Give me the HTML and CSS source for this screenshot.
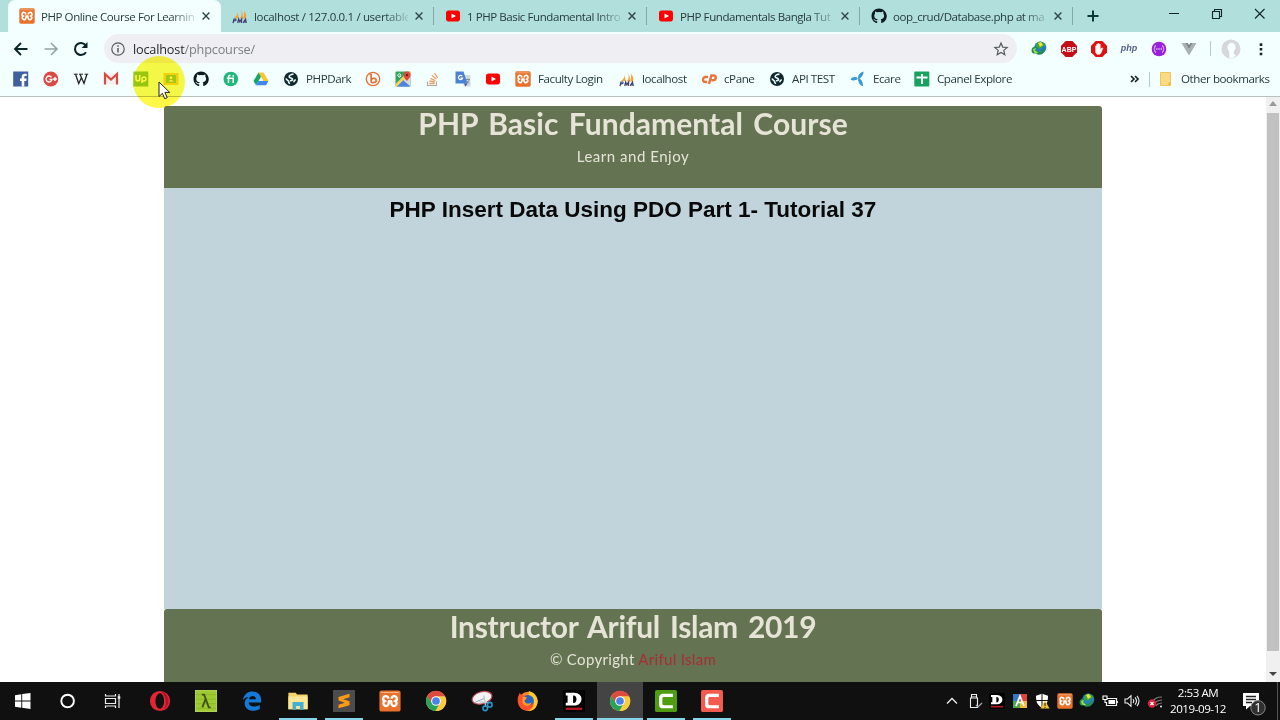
FILE: index.html
```html
<!DOCTYPE html>
<html lang="en">
<head>
<meta charset="utf-8">
<title>PHP Online Course For Learning</title>
<link rel="stylesheet" href="styles.css">
</head>
<body>
<svg class="sprite" xmlns="http://www.w3.org/2000/svg">
  <symbol id="xampp" viewBox="0 0 16 16"><rect x=".3" y=".3" width="15.4" height="15.4" rx="1.600" fill="#e8722c"/><path d="M1.500 1.800h13" stroke="#f7b78d" stroke-width=".7"/><path d="M6.500 8.200h3M7 8.200v1.600a1.900 1.900 0 1 1-2.900-1.700 1.900 1.900 0 1 1 2.700-1.700M9 8.200v1.600a1.900 1.900 0 1 0 2.900-1.700 1.900 1.900 0 1 0-2.700-1.700" fill="none" stroke="#fff" stroke-width="1.700"/></symbol>
  <symbol id="pma" viewBox="0 0 16 16"><path d="M5.500 1.500C6.500 5 5 8 2 10h4.500zM8 1c2.500 3 2 7-.5 9.500h3C11.500 7 10.500 4 8 1zM12 2.500c2.300 2.500 2.500 5 2.200 8H11c1-3 1.500-5 1-8z" fill="#f5a23a"/><path d="M1 15.200l1-4.200h1.800q1 1.800-1.900 1.900M5.700 15l1-4 1 2.800 2-2.800-.4 4M11 15l2.500-4 .8 4m-2.300-1.200h2.300" fill="none" stroke="#3b3b70" stroke-width="1.200"/></symbol>
  <symbol id="youtube" viewBox="0 0 16 16"><rect x="1" y="2.600" width="14" height="10.800" rx="2.600" fill="#f00"/><path d="M6.500 5.500v5L11 8z" fill="#fff"/></symbol>
  <symbol id="github" viewBox="0 0 16 16"><path fill="#0d1b20" d="M8 .5C3.800.5.5 3.800.5 8c0 3.500 2.200 6.200 5.200 7.100.4.100.5-.2.500-.4v-1.500c-2.100.5-2.600-.9-2.600-.9-.4-.9-.9-1.100-.9-1.100-.7-.5 0-.5 0-.5.800.1 1.200.8 1.200.8.700 1.200 1.800.8 2.300.6.100-.5.300-.8.500-1-1.700-.2-3.400-.8-3.400-3.700 0-.8.300-1.500.8-2-.1-.2-.3-1 .1-2 0 0 .6-.2 2.100.8a7 7 0 0 1 3.800 0c1.400-1 2.100-.8 2.100-.8.400 1 .1 1.800.1 2 .5.500.8 1.200.8 2 0 2.900-1.800 3.500-3.400 3.700.3.200.5.700.5 1.400v2.200c0 .2.100.5.500.4a7.500 7.500 0 0 0 5.100-7.100C15.500 3.800 12.200.5 8 .5z"/></symbol>
  <symbol id="globe" viewBox="0 0 16 16"><circle cx="8" cy="8" r="7" fill="#10282d"/><path d="M10.500 3C9 3.300 6 4 6.200 5.800c.2 1.500 3 1 3.300 2.600.2 1.300-1.500 1.500-2.700 1.300M3 7.500c.5 1.500 2.500 1.700 2.600 3.200 0 .8 1 1.200.8 2.300M12.800 8.800c-1.300.3-1.900 1.200-1.900 2.500" stroke="#e9fafa" stroke-width="1.600" fill="none"/></symbol>
  <symbol id="close" viewBox="0 0 16 16"><path d="M4.600 4.600l6.800 6.800m0-6.800l-6.800 6.800" stroke="#304648" stroke-width="1.400"/></symbol>
  <symbol id="chrome" viewBox="0 0 24 24"><circle cx="12" cy="12" r="11" fill="#fc4"/><path d="M2.500 6.500A11 11 0 0 1 22 7H12l-5 7.500z" fill="#dc4b3d"/><path d="M2.500 6.500A11 11 0 0 0 11.500 23l4.700-8.500L7 14z" fill="#29a35a"/><path d="M22 7H12l4.500 7.500-5 8.500A11 11 0 0 0 22 7z" fill="#fdcb3f"/><circle cx="12" cy="12" r="5.300" fill="#fff"/><circle cx="12" cy="12" r="4.200" fill="#4783e8"/></symbol>
  <symbol id="idm" viewBox="0 0 16 16"><circle cx="9.300" cy="6.500" r="6" fill="#277dc4"/><path d="M6 2c3-3 7-.5 8.500 2L9 8 5 6z" fill="#39a83c"/><path d="M7 2l3-1 2 3-3 2z" fill="#f2df38"/><path d="M.5 9C1 5.500 5 4.500 6 7l-1 3 4 1 4-4 1 2c-1 5-7 6-9 3.500C2 13 .5 12 .5 9z" fill="#278c52"/><path d="M2 8l3-1-1 2.500 3 2-1 1-3-1z" fill="#9be04b"/></symbol>
  <symbol id="dee" viewBox="0 0 24 24"><rect width="24" height="24" fill="#000"/><path d="M3 3h9c11 0 11 14 0 14H3v-3h2V6H3zm8 3v8c5 1 5-9 0-8z" fill="#fff" fill-rule="evenodd"/><path d="M3 20.500h18" stroke="#b81820" stroke-width="2.500"/></symbol>
  <symbol id="camtasia" viewBox="0 0 24 24"><rect width="24" height="24" rx="2" fill="currentColor"/><path d="M19.500 4H9.500C5.500 4 4.500 6 4.500 9v6c0 4 1 5 5 5h10v-3.500H10c-1.500 0-2-.5-2-2v-5c0-1.500.5-2 2-2h9.500z" fill="#fff"/></symbol>
</svg>

<header class="browser">
  <div class="tabs">
    <div class="tab active"><svg><use href="#xampp"/></svg><span>PHP Online Course For Learnin</span><svg class="x"><use href="#close"/></svg></div>
    <div class="tab"><svg><use href="#pma"/></svg><span class="t2">localhost / 127.0.0.1 / usertable</span><svg class="x"><use href="#close"/></svg></div>
    <div class="tab"><svg><use href="#youtube"/></svg><span>1 PHP Basic Fundamental Intro</span><svg class="x"><use href="#close"/></svg></div>
    <div class="tab"><svg><use href="#youtube"/></svg><span>PHP Fundamentals Bangla Tut</span><svg class="x"><use href="#close"/></svg></div>
    <div class="tab"><svg><use href="#github"/></svg><span>oop_crud/Database.php at ma</span><svg class="x"><use href="#close"/></svg></div>
    <svg class="newtab" viewBox="0 0 16 16"><path d="M8 2.500v11M2.500 8h11" stroke="#0a3a35" stroke-width="2"/></svg>
    <svg class="winctl" viewBox="0 0 110 32"><g fill="none" stroke="#122527" stroke-width="1.100"><path d="M9 13.500h10M52.500 11.500h7v7h-7zM54.500 11.500v-2h7v7h-2M95 9l9.500 9.500m0-9.500L95 18.500"/></g></svg>
  </div>
  <div class="toolbar">
    <svg class="nav" viewBox="0 0 16 16"><path d="M14.500 8H2.500M8 2L2 8l6 6" fill="none" stroke="#0b2427" stroke-width="1.900"/></svg>
    <svg class="nav" viewBox="0 0 16 16"><path d="M1.500 8h12M8 2l6 6-6 6" fill="none" stroke="#93a3a3" stroke-width="1.600"/></svg>
    <svg class="nav" viewBox="0 0 16 16"><path d="M13 11.200A6 6 0 1 1 12.500 4" fill="none" stroke="#0b2427" stroke-width="2"/><path d="M14.500 1v6H8.600z" fill="#0b2427"/></svg>
    <div class="omnibox">
      <svg viewBox="0 0 16 16"><circle cx="8" cy="8" r="6.200" fill="none" stroke="#555c60" stroke-width="1.200"/><path d="M8 7v4.500M8 4.300v1.500" stroke="#555c60" stroke-width="1.500"/></svg>
      <span class="url">localhost<i>/phpcourse/</i></span>
      <svg class="star" viewBox="0 0 16 16"><path d="M8 2l1.700 4.100 4.500.4-3.400 2.900 1 4.400L8 11.500l-3.800 2.300 1-4.400-3.400-2.900 4.500-.4z" fill="none" stroke="#555c60" stroke-width="1.200"/></svg>
    </div>
    <div class="exts">
      <svg><use href="#idm"/></svg>
      <svg viewBox="0 0 16 16"><path d="M4.700 0h6.600L16 4.700v6.600L11.300 16H4.700L0 11.300V4.700z" fill="#c70d17"/><text x="8" y="10.800" class="abp">ABP</text></svg>
      <svg viewBox="0 0 16 16"><path d="M4.700 0h6.600L16 4.700v6.600L11.300 16H4.700L0 11.300V4.700z" fill="#e01010"/><path d="M4.600 8V5h1.100v2V3.300h1.200V7 2.600h1.200V7 3.300h1.200v4l.3 1.200 1.300-1.700 1 .5-1.800 4.500-1.200 1.500H6l-1.400-2z" fill="#fff" stroke="#fff" stroke-width=".5"/></svg>
      <span class="php">php</span>
      <svg viewBox="0 0 16 16"><circle cx="8" cy="8" r="7.300" fill="#9a20dc"/><path d="M5 4.500c-2 0-.5 3-2.200 3.500 1.700.5.200 3.500 2.200 3.500M11 4.500c2 0 .5 3 2.200 3.500-1.700.5-.2 3.500-2.200 3.500" fill="none" stroke="#e9c9fa"/><path d="M5 8h6" stroke="#fff" stroke-dasharray="1.500 .8"/></svg>
      <svg viewBox="0 0 16 16"><path d="M.5 2h4L8 8l3.500-6h4L8 14.500z" fill="#a8b0b1"/><path d="M4.500 2h2.200L8 4.200 9.300 2h2.200L8 8z" fill="#788182"/></svg>
    </div>
    <i class="sep"></i>
    <svg class="avatar" viewBox="0 0 20 20"><circle cx="10" cy="10" r="9.500" fill="#d6d7da"/><ellipse cx="10.500" cy="8.500" rx="4" ry="4.700" fill="#f8ffff"/><path d="M8 11h4.500l.3 4 2.200 1.500-3 2.500H8.500z" fill="#f8ffff"/></svg>
    <svg class="menu" viewBox="0 0 16 16"><path d="M8 2.300v2.600M8 7v2.600M8 11.700v2.600" stroke="#16282a" stroke-width="2.600"/></svg>
  </div>
  <nav class="bookmarks">
    <a><svg viewBox="0 0 16 16"><rect x=".2" y=".5" width="15" height="15" fill="#3f5f9f"/><path d="M8.700 15.500V10H7V7.600h1.700V6c0-2.300 1.300-3.200 3-3.200h2V5h-1.300c-.9 0-1.100.5-1.100 1.200v1.400h2.300L13.300 10h-2v5.500z" fill="#fff"/></svg></a>
    <a><svg viewBox="0 0 16 16"><circle cx="7.800" cy="8" r="7.500" fill="#dc4a43"/><path d="M8.500 6.300A3 3 0 1 0 9 8.500H6.400M12 6v4m-2-2h4" fill="none" stroke="#fff" stroke-width="1.400"/></svg></a>
    <a><svg viewBox="0 0 16 16"><path d="M.8 3.200h4M6 3.200h4M11.500 3.200h3.700" stroke="#222" stroke-width="1"/><path d="M2.500 3.200l3.200 9.300L8.500 6.500M7 3.200l4 9.300 2.900-9.300" fill="none" stroke="#222" stroke-width="1.300"/></svg></a>
    <a><svg viewBox="0 0 16 16"><path d="M1 2.500h14v11H1z" fill="#f3f0f0"/><path d="M2 13.500V3l6 5.500L14 3v10.500" fill="none" stroke="#d94b42" stroke-width="2.200"/></svg></a>
    <a><svg viewBox="0 0 16 16"><rect x=".3" y=".5" width="15" height="15" fill="#98cb36"/><path d="M3 4v4c0 2.500 3.700 2.500 3.700 0V4M9 12V6.500m0 1c1-2.500 4-1.500 4 .5s-3 3-4 1" fill="none" stroke="#fff" stroke-width="1.500"/></svg></a>
    <a><svg viewBox="0 0 16 16"><path d="M.5 2h15v12H.5z" fill="#f3d52c"/><path d="M3 4h10v8H3z" fill="#a4cc45"/><circle cx="8" cy="6.700" r="1.300" fill="#fff"/><path d="M5.200 10.500q2.800-3 5.600 0z" fill="#fff"/></svg></a>
    <a><svg><use href="#github"/></svg></a>
    <a><svg viewBox="0 0 16 16"><circle cx="7.800" cy="8" r="7.300" fill="#20b878"/><path d="M5.500 12V6q0-1.700 2-1.700M3.800 7.300h6.400V12" fill="none" stroke="#fff" stroke-width="1.500"/><circle cx="10.200" cy="4.800" r=".9" fill="#fff"/></svg></a>
    <a><svg viewBox="0 0 16 16"><path d="M5.500 1.500h5L15.500 10h-5z" fill="#fbc52d"/><path d="M5.500 1.500L.5 10 3 14.300 8 5.800z" fill="#16a765"/><path d="M3 14.300h10l2.500-4.300h-10z" fill="#4385ef"/></svg></a>
    <a><svg><use href="#globe"/></svg><span>PHPDark</span></a>
    <a><svg viewBox="0 0 16 16"><circle cx="8" cy="8" r="6.700" fill="none" stroke="#e86f35" stroke-width="1.300"/><path d="M4.500 3.500h1.700v7.300c0 1.300 5 1.300 5-1.300S7.500 6.300 6.500 9" fill="none" stroke="#e86f35" stroke-width="1.700"/></svg></a>
    <a><svg viewBox="0 0 16 16"><rect x=".5" y=".5" width="15" height="15" rx="1" fill="#32a35b"/><path d="M.5 13L13 .5h2.500v3l-12 12h-3z" fill="#f6d35a"/><path d="M2 15.500L8.500 9l6.500 6.500z" fill="#4a86e8"/><path d="M8.500 9.500l7 6V4z" fill="#d8dada"/><path d="M12 10C9.300 7 8.500 5.500 8.500 4a3.500 3.500 0 0 1 7 0c0 1.500-1 3-3.500 6z" fill="#df493f"/><circle cx="12" cy="4" r="1.200" fill="#7b201d"/><path d="M5.800 3.600a1.600 1.600 0 1 0 .2 1.200H4.500" stroke="#fff" fill="none"/></svg></a>
    <a><svg viewBox="0 0 16 16"><path d="M2.500 10.500v4h9v-4" fill="none" stroke="#a6aaa9" stroke-width="1.100"/><path d="M4.200 12.500h5.500M4.400 10l5.400 1M5.300 7.300l5 2.400M7 4.500l4.300 3.600M9.500 2l3.200 4.800" stroke="#eea266" stroke-width="1.300"/></svg></a>
    <a><svg viewBox="0 0 16 16"><path d="M6 4h9.500v11.500H9z" fill="#d3d9dc"/><path d="M.5.5h8l4 12H.5z" fill="#4a82da"/><path d="M9 12.500h3.500l-2 3z" fill="#315cac"/><path d="M7.200 5.200a2.100 2.100 0 1 0 .3 2H5.500" fill="none" stroke="#fff" stroke-width="1.200"/><path d="M10.500 8.500h4.500m-2.300-1v1m1.500 0c-.5 2-1.500 3-2.500 3.500m-.2-2.500l2.500 3" fill="none" stroke="#74838d" stroke-width=".8"/></svg></a>
    <a><svg><use href="#youtube"/></svg></a>
    <a><svg><use href="#xampp"/></svg><span>Faculty Login</span></a>
    <a><svg><use href="#pma"/></svg><span>localhost</span></a>
    <a><svg viewBox="0 0 16 16"><path d="M7 6H4.500a2.500 2.500 0 0 0 0 5H6M8 13l2.400-8.500h2a2.300 2.300 0 0 1 0 4.700h-2" fill="none" stroke="#ed713a" stroke-width="2.400"/></svg><span>cPane</span></a>
    <a><svg><use href="#globe"/></svg><span>API TEST</span></a>
    <a><svg viewBox="0 0 16 16"><g fill="#3797d8"><path d="M8 7c0-3 2-5.500 5.500-6.500C14 3 12 6 8.500 8.500zM7 6.500C4.500 5.500 2 6 .5 8.500 3 10 5.500 9.500 8 8zM8.500 7.500c2.500 0 4.500 3 4.500 7.500-2.500 0-4-2.500-5-6z"/></g></svg><span>Ecare</span></a>
    <a><svg viewBox="0 0 16 16"><rect x=".3" y=".5" width="15" height="15" rx="1" fill="#17a260"/><path d="M2.500 6.500h11M8 3v10" stroke="#fff" stroke-width="2"/></svg><span>Cpanel Explore</span></a>
    <a><svg class="more" viewBox="0 0 16 16"><path d="M4 5l3 3-3 3M8 5l3 3-3 3" fill="none" stroke="#142528" stroke-width="1.700"/></svg></a>
    <a class="other"><svg viewBox="0 0 16 16"><path d="M2.500 1.500h10v13h-10z" fill="#fadb84" stroke="#efc65c"/><path d="M10.500 14.500v-3h2v3z" fill="#e9b93e"/></svg><span>Other bookmarks</span></a>
  </nav>
</header>

<main class="viewport">
  <div class="page">
    <section class="banner"><h1 class="h-top">PHP Basic Fundamental Course</h1><p class="p-top">Learn and Enjoy</p></section>
    <section class="content"><h2>PHP Insert Data Using PDO Part 1- Tutorial 37</h2></section>
    <section class="banner"><h1 class="h-foot">Instructor Ariful Islam 2019</h1><p class="p-foot">© Copyright <a>Ariful Islam</a></p></section>
  </div>
  <div class="scrollbar"><i class="up"></i><div class="thumb"></div><i class="down"></i></div>
</main>

<footer class="taskbar">
  <div class="apps">
    <span class="sys"><svg viewBox="0 0 24 24"><path d="M4 6.200l6.300-1v6.300H4zM11.200 5.100L19.500 4v7.500h-8.300zM4 12.400h6.300v6.400L4 17.800zM11.200 12.400h8.300V20l-8.300-1.200z" fill="#fff"/></svg></span>
    <span class="sys"><svg viewBox="0 0 24 24"><circle cx="11.600" cy="12" r="6.300" fill="none" stroke="#fff" stroke-width="1.900"/></svg></span>
    <span class="sys task"><svg viewBox="0 0 24 24"><g fill="none" stroke="#eee" stroke-width="1.200"><path d="M4.500 5v2h10V5M4.500 9.500h10v5h-10zM4.500 19v-2h10v2M18 5v14"/><path d="M16.700 8.500h2.600" stroke-width="2.400"/></g></svg></span>
    <span><svg viewBox="0 0 24 24"><path fill-rule="evenodd" fill="#e32635" d="M12 1a11 11 0 1 0 0 22 11 11 0 0 0 0-22zm0 2.500c-6.500 1-6.500 16 0 17 6-1 6-16 0-17z"/><path d="M15 2c7 3 9 15 1 19 4-5 3-14-2-18z" fill="#ae1326"/></svg></span>
    <span><svg viewBox="0 0 24 24"><rect x=".5" y=".5" width="23" height="23" fill="#9fca32" stroke="#b8da58"/><path d="M1 5h22M1 10h22M1 15h22M1 20h22" stroke="#83b31e" stroke-width=".8"/><path d="M7.500 5h2.500l5 14H17M11.500 10L8 19" fill="none" stroke="#3f5025" stroke-width="2"/></svg></span>
    <span><svg viewBox="0 0 24 24"><path fill="#1479d7" d="M2 11C3.500 4 7.500 1.500 12.500 1.500c6 0 9.500 4.500 9.500 9v3H8.500c0 5 7.500 5.500 12 2.800v4.500C13 25 4 22 4 14.500c0-3 1.500-5.500 4.500-7C5.500 7.500 3 9.500 2 11zm6.700-1h7.500c0-4.500-6.500-4.500-7.500 0z"/></svg></span>
    <span class="run"><svg viewBox="0 0 24 24"><path d="M1.500 3h8l1.500 2h11.500v16h-21z" fill="#f5d36b"/><path d="M1.500 7h21v14h-21z" fill="#ffe596"/><path d="M6 13h12v8.500h-4v-4h-4v4H6z" fill="#43b0d6"/></svg></span>
    <span class="run"><svg viewBox="0 0 24 24"><rect width="24" height="24" fill="#4c4c4e"/><path d="M18 4v4L11 10.200l7 2v4.300L6 20v-4l7-2.200-7-2.300V7.500z" fill="#ff9b12"/></svg></span>
    <span><svg><use href="#xampp"/></svg></span>
    <span><svg><use href="#chrome"/></svg></span>
    <span><svg viewBox="0 0 24 24"><ellipse cx="12" cy="8.500" rx="11" ry="6.500" transform="rotate(-15 12 8.500)" fill="#f4f4f6" stroke="#c24d51" stroke-width="1.300"/><path d="M3 14l12-5" stroke="#959bad"/><path d="M14 6l2 12M9 13l10 1" stroke="#bec9d3" stroke-width="1.500"/><circle cx="15.500" cy="20" r="2.500" fill="none" stroke="#2699cf" stroke-width="1.700"/><circle cx="20.500" cy="16" r="2.500" fill="none" stroke="#2699cf" stroke-width="1.700"/></svg></span>
    <span><svg viewBox="0 0 24 24"><circle cx="12" cy="12.500" r="10.500" fill="#ff8321"/><path d="M13 1c8 2 12 10 8 17-2 4-6 5-9 5 5-2 8-6 5-11-3-3-5-5-4-11z" fill="#ffcb29"/><circle cx="12" cy="12" r="6.500" fill="#2a62c4"/><path d="M3 3c1 2 2 3 5 3l2 4-3 2c0 6 8 6 11 2 0 6-5 9-9 8C2 21 0 14 1 8z" fill="#ff502d"/><path d="M6 7l5 1-3 4c2 4 6 3 8 1-1 5-8 6-10 1z" fill="#f89e24"/></svg></span>
    <span class="run"><svg><use href="#dee"/></svg></span>
    <span class="run current"><svg><use href="#chrome"/></svg></span>
    <span class="run green"><svg><use href="#camtasia"/></svg></span>
    <span class="run red"><svg><use href="#camtasia"/></svg></span>
  </div>
  <div class="tray">
    <svg viewBox="0 0 16 16"><path d="M3 10.500l5-5 5 5" fill="none" stroke="#eee" stroke-width="1.300"/></svg>
    <svg viewBox="0 0 16 16"><path d="M4.500 5V1.500h5V5M3.500 5h7v9.500h-7zM6 3v1m2-1v1" fill="none" stroke="#eee" stroke-width="1.100"/><path d="M9 12l2 2 4-4" fill="none" stroke="#aaa" stroke-width="1.200"/></svg>
    <svg><use href="#dee"/></svg>
    <svg viewBox="0 0 16 16"><path d="M1 1h7v7H1z" fill="#3478c5"/><path d="M8 1h7v7H8z" fill="#df433b"/><path d="M1 8h7v7H1z" fill="#4da84d"/><path d="M8 8h7v7H8z" fill="#f2ba31"/><path d="M4 13L8 3l4 10M5.500 9.500h5" fill="none" stroke="#fff" stroke-width="1.700"/></svg>
    <svg viewBox="0 0 16 16"><path d="M8 .8l6 2c0 6-1 9-6 12C3 12 2 9 2 2.800z" fill="#fff"/><path d="M8 1v14M2 7.500h12" stroke="#111"/><path d="M11 7.500l4.500 8h-9z" fill="#f5c52d"/><path d="M11 10v3m0 .8v1" stroke="#222"/></svg>
    <svg><use href="#xampp"/></svg>
    <svg><use href="#idm"/></svg>
    <svg viewBox="0 0 16 16"><path d="M5 5.500h9.500v7H4.500v-3" fill="none" stroke="#eee" stroke-width="1.200"/><path d="M6.500 7h6.500v4H6.500z" fill="#fff"/><path d="M1 3h4v3.500H1zM3 6.500v3h2M15.300 8v2" fill="none" stroke="#fff" stroke-width="1.100"/></svg>
    <svg viewBox="0 0 16 16"><path d="M1 6h2.500L7 2.700v10.600L3.500 10H1zM9 6q1.500 2 0 4M11 4.300q3 3.700 0 7.400M13 2.800q4 5.200 0 10.400" fill="none" stroke="#eee" stroke-width="1.100"/></svg>
    <svg viewBox="0 0 16 16"><path d="M5 9Q8 4 15 4M7 11Q9 7.500 15 7M9 13Q10 10.500 15 10" fill="none" stroke="#7c7c7c" stroke-width="1.200"/><circle cx="14" cy="13.500" r="1" fill="#eee"/><circle cx="5" cy="10.500" r="4.200" fill="#d92335"/><path d="M3.500 9l3 3m0-3l-3 3" stroke="#fff" stroke-width="1.200"/></svg>
  </div>
  <div class="clock"><span class="time">2:53 AM</span><span class="date">2019-09-12</span></div>
  <svg class="notify" viewBox="0 0 26 26"><path d="M2 2h16v13H9l-4 3.500V15H2z" fill="#fff"/><path d="M5 5.500h10M5 8.500h10M5 11.500h6" stroke="#222" stroke-width="1.300"/><circle cx="17" cy="16.800" r="7.200" fill="#303030" stroke="#888"/><text x="17" y="21.200">1</text></svg>
  <i class="peek"></i>
</footer>
<svg class="pointer" viewBox="0 0 54 54"><circle cx="27" cy="27" r="26" fill="#fff845"/></svg>
<svg class="cursor" viewBox="0 0 14 20"><path d="M1 1v14.500l3.400-3.200 2.300 5.400 2.500-1-2.300-5.300h4.800z" fill="#fff" stroke="#222"/></svg>
</body>
</html>
```
FILE: styles.css
```css
* { box-sizing: border-box; }
body { margin: 0; width: 1280px; height: 720px; overflow: hidden; display: flex; flex-direction: column; background: #fff; font-family: "Open Sans", "Noto Sans", sans-serif; font-size: 12px; color: #263b3e; position: relative; }
svg { display: block; flex: none; }
i { font-style: normal; }
.sprite { position: absolute; width: 0; height: 0; }

.browser { height: 97px; background: #f2fffe; border-bottom: 1px solid #b9c0c1; flex: none; }
.tabs { height: 32px; display: flex; background: #b1dfdc; padding-left: 8px; }
.tab { width: 213px; height: 32px; display: flex; align-items: center; padding-left: 11px; flex: none; position: relative; }
.tab svg { width: 16px; height: 16px; }
.tab span { width: 154px; margin-left: 6px; white-space: nowrap; font-size: 11.5px; letter-spacing: -.42px; -webkit-mask-image: linear-gradient(90deg, #000 130px, rgba(0,0,0,.15) 154px); mask-image: linear-gradient(90deg, #000 130px, rgba(0,0,0,.15) 154px); }
.tab .t2 { letter-spacing: -.34px; }
.tab .x { margin-left: 3px; }
.tab:not(.active)::after { content: ""; position: absolute; right: 0; top: 7px; width: 1px; height: 18px; background: #82a9a8; }
.active { background: #f2fffe; border-radius: 7px 7px 0 0; }
.newtab { width: 16px; height: 16px; margin: 8px 0 0 12px; }
.winctl { width: 110px; height: 32px; margin-left: 59px; }
.toolbar { height: 33px; display: flex; align-items: center; padding-left: 13px; }
.nav { width: 16px; height: 16px; margin-right: 14px; }
.omnibox { width: 913px; height: 29px; border-radius: 15px; background: #efeff3; display: flex; align-items: center; padding: 0 8px 0 6px; margin-left: 1px; }
.omnibox svg { width: 16px; height: 16px; }
.url { font-size: 12.7px; letter-spacing: -.18px; margin-left: 7px; color: #24292c; flex: 1; }
.url i { color: #7a7f83; }
.exts { display: flex; gap: 14px; margin-left: 14px; align-items: center; }
.exts svg, .php { width: 16px; height: 16px; }
.abp { font: bold 7px "Liberation Sans", sans-serif; fill: #fff; text-anchor: middle; }
.php { font: italic bold 9px/15px "Liberation Sans", sans-serif; color: #565d91; text-align: center; display: flex; justify-content: center; }
.sep { width: 1px; height: 15px; background: #b4cdcd; margin-left: 13px; }
.avatar { width: 20px; height: 20px; margin-left: 10px; }
.menu { width: 16px; height: 16px; margin-left: 12px; }
.bookmarks { height: 28px; padding-left: 13px; display: grid; align-items: center; grid-template-columns: repeat(9, 30px) 82px repeat(5, 30px) 104px 82px 68px 81px 64px 213px 22px 130px; }
.bookmarks a { display: flex; align-items: center; gap: 7px; white-space: nowrap; }
.bookmarks svg { width: 16px; height: 16px; }
.bookmarks .other { border-left: 1px solid #b4cdcd; padding-left: 8px; height: 15px; }
.bookmarks span { font-size: 11.6px; letter-spacing: -.44px; position: relative; top: -1px; }

.viewport { height: 585px; display: flex; background: #fff; overflow: hidden; flex: none; }
.page { width: 938px; margin: 9px 164px 0; flex: none; text-align: center; }
.banner { height: 82px; background: #647352; border-radius: 3px 3px 0 0; color: #e5e4d6; font-family: Lato, sans-serif; }
.banner h1 { margin: 0; font-size: 30px; line-height: 36px; font-weight: 700; white-space: nowrap; position: relative; top: -1px; }
.h-top { word-spacing: 3px; letter-spacing: .05px; }
.h-foot { word-spacing: 3px; letter-spacing: -.3px; }
.banner p { margin: 5px 0 0; font-size: 15px; line-height: 18px; }
.p-top { letter-spacing: .52px; }
.p-foot { letter-spacing: .32px; }
.banner a { color: #a92d36; }
.content { height: 421px; background: #c1d4db; }
.content h2 { margin: 0; padding-top: 8px; color: #090909; font: bold 22.5px/28px "Liberation Sans", sans-serif; }
.scrollbar { width: 14px; background: #f0f0f0; display: flex; flex-direction: column; align-items: center; }
.thumb { width: 12px; height: 538px; background: #c1c1c1; }
.up, .down { width: 0; height: 0; border: 4px solid transparent; }
.up { border-bottom-color: #999; margin: 1px 0 7px; border-bottom-width: 5px; border-top-width: 3px; }
.down { border-top-color: #444; margin-top: 21px; }

.taskbar { height: 38px; background: #101010; display: flex; flex: none; color: #fff; }
.apps { display: flex; width: 941px; }
.apps span { width: 46px; height: 38px; display: flex; justify-content: center; align-items: center; position: relative; }
.apps svg { width: 22px; height: 22px; }
.apps .sys { width: 45px; }
.apps .sys svg { width: 24px; height: 24px; }
.apps .task { margin-right: 2px; }
.run::after { content: ""; position: absolute; left: 4px; right: 4px; bottom: 0; height: 2px; background: #83d5e7; }
.current { background: #444; }
.current::after { left: 0; right: 0; }
.green { color: #4e9c12; } .red { color: #f25b4d; }
.tray { display: flex; align-items: center; gap: 6.5px; padding-left: 3px; width: 229px; }
.tray svg { width: 16px; height: 16px; }
.clock { width: 56px; display: flex; flex-direction: column; align-items: center; line-height: 16px; padding-top: 3px; font-size: 11.6px; letter-spacing: -.45px; white-space: nowrap; }
.notify { width: 26px; height: 26px; margin: 9px 0 0 15px; }
.notify text { font: 13px "Open Sans", sans-serif; fill: #fff; text-anchor: middle; }
.peek { width: 1px; background: #555; margin-left: 10px; }
.pointer { position: absolute; left: 132px; top: 55px; width: 54px; height: 54px; mix-blend-mode: multiply; }
.cursor { position: absolute; left: 158px; top: 81px; width: 14px; height: 20px; }
```
